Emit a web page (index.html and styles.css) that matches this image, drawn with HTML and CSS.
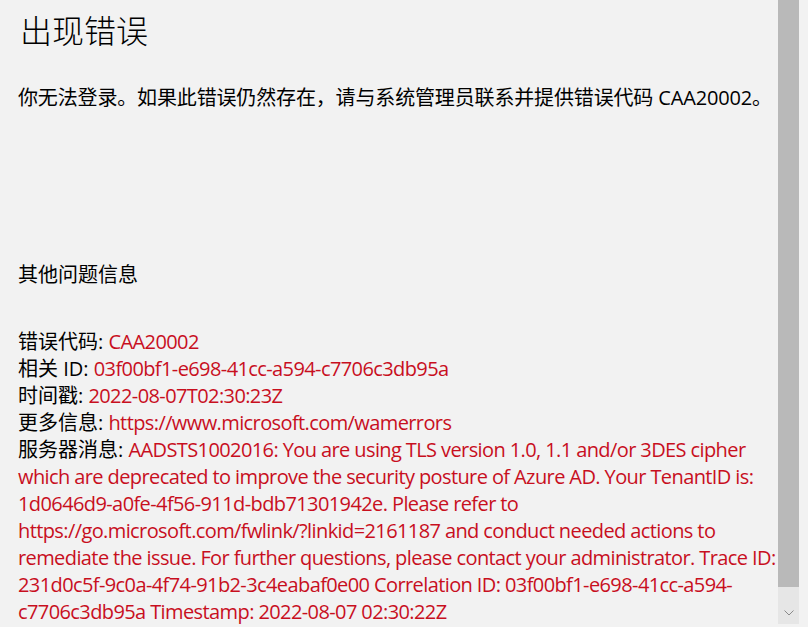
FILE: index.html
```html
<!DOCTYPE html>
<html>
<head>
    <meta charset="utf-8">
    <title>出现错误</title>
    <link rel="stylesheet" href="styles.css">
</head>
<body>
    <div class="window">
        <!-- Main error content -->
        <div class="content">
            <h1 class="title">出现错误</h1>
            <p class="message">你无法登录。如果此错误仍然存在，请与系统管理员联系并提供错误代码 CAA20002。</p>

            <h2 class="subtitle">其他问题信息</h2>

            <div class="details">
                <div class="row">错误代码: <span class="value">CAA20002</span></div>
                <div class="row">相关 ID: <span class="value">03f00bf1-e698-41cc-a594-c7706c3db95a</span></div>
                <div class="row">时间戳: <span class="value">2022-08-07T02:30:23Z</span></div>
                <div class="row">更多信息: <span class="value">https://www.microsoft.com/wamerrors</span></div>
                <div class="row">服务器消息: <span class="value">AADSTS1002016: You are using TLS version 1.0, 1.1 and/or 3DES cipher which are deprecated to improve the security posture of Azure AD. Your TenantID is: 1d0646d9-a0fe-4f56-911d-bdb71301942e. Please refer to https://go.microsoft.com/fwlink/?linkid=2161187 and conduct needed actions to remediate the issue. For further questions, please contact your administrator. Trace ID: 231d0c5f-9c0a-4f74-91b2-3c4eabaf0e00 Correlation ID: 03f00bf1-e698-41cc-a594-c7706c3db95a Timestamp: 2022-08-07 02:30:22Z</span></div>
            </div>
        </div>

        <!-- Scrollbar drawn to look like the window's -->
        <div class="scrollbar">
            <div class="thumb"></div>
            <div class="track">
                <svg class="arrow" width="10" height="6" viewBox="0 0 10 6">
                    <path d="M0.5 0.5 L5 5 L9.5 0.5" fill="none" stroke="#8a8a8a" stroke-width="1"/>
                </svg>
            </div>
        </div>
    </div>
</body>
</html>
```

FILE: styles.css
```css
/* Page base */
html, body {
    margin: 0;
    height: 100%;
    background-color: #f2f2f2;
    overflow: hidden;
}

body {
    font-family: "Open Sans", "Noto Sans CJK SC", sans-serif;
    color: #000;
}

/* Window: content column plus the scrollbar */
.window {
    display: flex;
    height: 100vh;
    padding-right: 9px;
    box-sizing: border-box;
}

.content {
    flex: 1;
    padding: 10px 0 0 18px;
    overflow: hidden;
}

/* Heading */
.title {
    margin: 0;
    font-size: 32px;
    font-weight: 300;
    line-height: 42px;
    padding-left: 2px;
}

/* Main message */
.message {
    margin: 32px 0 0 0;
    font-size: 20px;
    line-height: 27px;
    letter-spacing: -0.15px;
}

/* Section heading */
.subtitle {
    margin: 150px 0 0 0;
    font-size: 20px;
    font-weight: normal;
    line-height: 27px;
}

/* Detail rows */
.details {
    margin-top: 40px;
    font-size: 20px;
    line-height: 27px;
}

.value {
    color: #c80f1e;
    letter-spacing: -0.6px;
}

/* Scrollbar */
.scrollbar {
    width: 21px;
    display: flex;
    flex-direction: column;
    height: 624px;
}

.thumb {
    height: 587px;
    background-color: #b9b9b9;
}

.track {
    flex: 1;
    background-color: #e6e6e6;
    display: flex;
    align-items: flex-end;
    justify-content: center;
    padding-bottom: 8px;
}
```
